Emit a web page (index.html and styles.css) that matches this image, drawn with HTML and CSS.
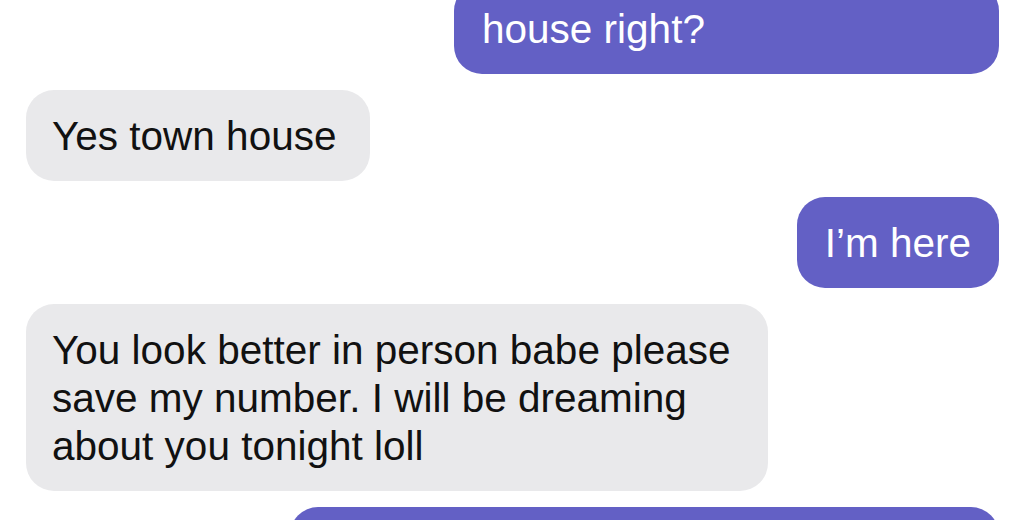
FILE: index.html
```html
<!DOCTYPE html>
<html lang="en">
  <head>
    <meta charset="UTF-8" />
    <meta name="viewport" content="width=device-width, initial-scale=1.0" />
    <title>Messages</title>
    <link rel="stylesheet" href="styles.css">
  </head>
  <body>
    <div class="thread">
      <div class="msg sent wide">house right?</div>
      <div class="msg received">Yes town house</div>
      <div class="msg sent">I’m here</div>
      <div class="msg received long">
        You look better in person babe please save my number. I will be dreaming about you tonight loll
      </div>
      <div class="msg sent next">&nbsp;</div>
    </div>
  </body>
</html>
```

FILE: styles.css
```css
html,
body {
  height: 100%;
}
body {
  margin: 0;
  background: #fff;
  font-family: "Liberation Sans", Arial, sans-serif;
  overflow: hidden;
}
.thread {
  display: flex;
  flex-direction: column;
  gap: 16px;
  padding: 0 25px 0 26px;
  margin-top: -17px;
  height: calc(100% + 17px);
  overflow: hidden;
}
.msg {
  flex-shrink: 0;
  font-size: 40.5px;
  line-height: 48px;
  padding: 22px 34px 21px 26px;
  border-radius: 28px;
  max-width: 690px;
}
.sent {
  align-self: flex-end;
  background: #6360c5;
  color: #fff;
  padding-right: 28px;
  padding-left: 28px;
}
.received {
  align-self: flex-start;
  background: #e9e9eb;
  color: #111;
}
.wide {
  width: 489px;
}
.long {
  width: 682px;
}
.next {
  width: 653px;
  max-width: none;
}
```
